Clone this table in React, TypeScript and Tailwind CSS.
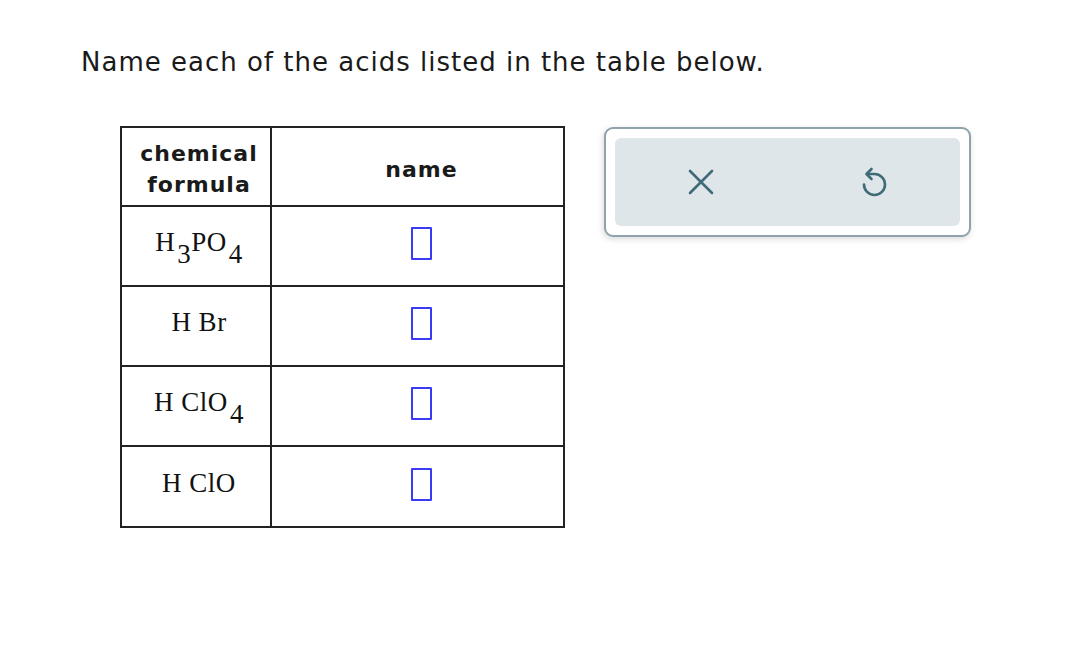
const ROWS: { parts: [string, string?][] }[] = [
  { parts: [["H", "3"], ["PO", "4"]] },
  { parts: [["H Br"]] },
  { parts: [["H ClO", "4"]] },
  { parts: [["H ClO"]] },
];

function Formula({ parts }: { parts: [string, string?][] }) {
  return (
    <span className="font-['Liberation_Serif',serif] text-[27px] tracking-[0.5px] text-[#111]">
      {parts.map(([main, sub], i) => (
        <span key={i}>
          {main}
          {sub && <sub className="text-[27px] ml-[2px] top-[12px] bottom-auto">{sub}</sub>}
        </span>
      ))}
    </span>
  );
}

function AnswerBox() {
  return <div className="w-[21px] h-[33px] border-2 border-[#3b3bf5] rounded-[1px]" />;
}

export default function App() {
  return (
    <div className="w-[1071px] h-[645px] bg-white font-['DejaVu_Sans',sans-serif] text-[#1a1a1a]">
      <div className="pl-[81px] pt-[47px] text-[26px] leading-[30px] tracking-[1px]">
        Name each of the acids listed in the table below.
      </div>

      <div className="flex items-start pl-[120px] pt-[49px] gap-[39px]">
        <table className="border-collapse border-2 border-[#222]">
          <thead>
            <tr className="h-[79px]">
              <th className="w-[150px] border-2 border-[#222] text-[22px] tracking-[1px] leading-[31px] font-bold pt-[4px] pl-[6px]">
                chemical
                <br />
                formula
              </th>
              <th className="w-[293px] border-2 border-[#222] text-[22px] tracking-[1px] font-bold pl-[8px] pt-[5px]">
                name
              </th>
            </tr>
          </thead>
          <tbody>
            {ROWS.map((r, i) => (
              <tr key={i} className={i === 3 ? "h-[81px]" : "h-[80px]"}>
                <td className="border-2 border-[#222] text-center pl-[6px] pb-[7px]">
                  <Formula parts={r.parts} />
                </td>
                <td className="border-2 border-[#222]">
                  <div className="flex justify-center pl-[8px] pb-[5px]">
                    <AnswerBox />
                  </div>
                </td>
              </tr>
            ))}
          </tbody>
        </table>

        <div className="mt-[1px] w-[367px] h-[110px] border-2 border-[#8ea3ab] rounded-[9px] bg-white p-[9px] shadow-[-1px_2px_6px_rgba(0,0,0,0.15)]">
          <div className="h-full rounded-[6px] bg-[#dfe6e9] flex items-center">
            <div className="flex-1 flex justify-center">
              <svg width="28" height="28" viewBox="0 0 28 28" fill="none" stroke="#3f6a77" strokeWidth="2.6" strokeLinecap="round">
                <path d="M3 3 L25 25 M25 3 L3 25" />
              </svg>
            </div>
            <div className="flex-1 flex justify-center">
              <svg width="30" height="32" viewBox="0 0 30 32" fill="none" stroke="#3f6a77" strokeWidth="2.6" strokeLinecap="round" strokeLinejoin="round" className="translate-y-[1px]">
                <path d="M8 7 H15.5 A10.5 10.5 0 1 1 5 17.5" />
                <path d="M12.5 2 L7.5 7 L12.5 12" />
              </svg>
            </div>
          </div>
        </div>
      </div>
    </div>
  );
}
